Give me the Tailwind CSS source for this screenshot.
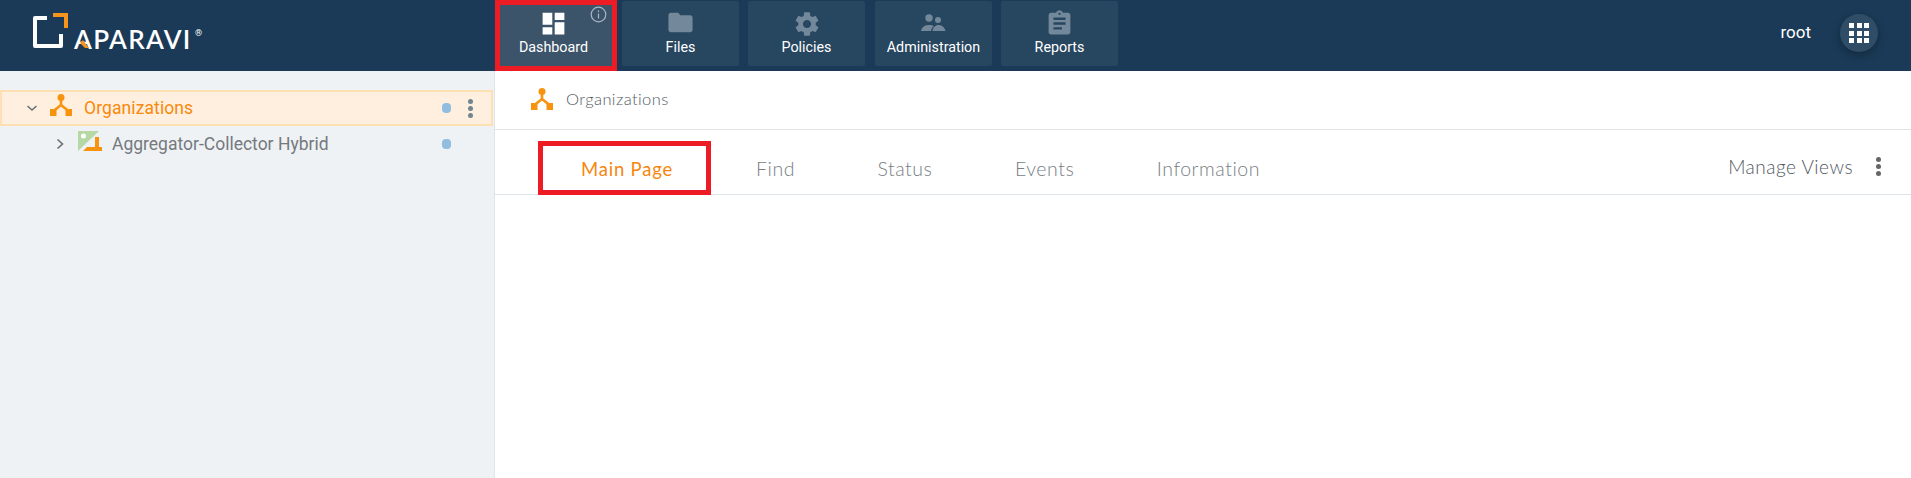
<!DOCTYPE html>
<html lang="en">
<head>
<meta charset="utf-8">
<script src="https://cdn.jsdelivr.net/npm/@tailwindcss/browser@4"></script>
<title>Aparavi</title>
</head>
<body class="w-[1911px] h-[478px] overflow-hidden bg-white font-['Roboto',sans-serif]">
<header class="h-[71px] bg-[#1a3a57] flex relative">
  <div class="w-[495px] shrink-0 relative">
    <svg class="absolute left-[30px] top-[10px]" width="40" height="40" viewBox="0 0 40 40" fill="none">
      <path d="M17 8H5V36H31V24" stroke="#fff" stroke-width="4" stroke-linejoin="round"/>
      <path d="M23 5H36V18" stroke="#f7941d" stroke-width="4"/>
    </svg>
    <span class="absolute left-[74px] top-[23px] text-[26px] leading-[32px] font-semibold tracking-[1.300px] text-white font-['Lato',sans-serif]">APARAVI</span>
    <svg class="absolute left-[80px] top-[40px]" width="9" height="9" viewBox="0 0 9 9" fill="#f7941d"><path d="M0 3 3 0l6 8H5z"/></svg>
    <span class="absolute left-[195px] top-[28px] text-[9px] leading-[10px] text-white">®</span>
  </div>
  <nav class="flex items-start gap-[9px] text-[14.300px] font-normal text-white leading-none">
    <a class="relative w-[122px] h-[71px] -mr-[4px] border-[5px] border-[#ed1c24] bg-[#3c5469] flex flex-col items-center pr-[5px]">
      <svg class="mt-[4px]" width="29" height="29" viewBox="0 0 24 24" fill="#fff"><path d="M3 13h8V3H3v10zm0 8h8v-6H3v6zm10 0h8V11h-8v10zm0-18v6h8V3h-8z"/></svg>
      <span class="mt-[2px]">Dashboard</span>
      <svg class="absolute right-[5px] top-[1px]" width="17" height="17" viewBox="0 0 17 17" fill="none" stroke="#aab6c1" stroke-width="1.200"><circle cx="8.500" cy="8.500" r="7.300"/><path d="M8.500 7.500v5M8.500 4.500v1.500"/></svg>
    </a>
    <a class="w-[117px] h-[65px] mt-[1px] rounded-[2px] bg-[#27465f] flex flex-col items-center">
      <svg class="mt-[7px]" width="29" height="29" viewBox="0 0 24 24" fill="#74889b"><path d="M10 4H4c-1.100 0-1.990.9-1.990 2L2 18c0 1.100.9 2 2 2h16c1.100 0 2-.9 2-2V8c0-1.100-.9-2-2-2h-8l-2-2z"/></svg>
      <span class="mt-[3px]">Files</span>
    </a>
    <a class="w-[117px] h-[65px] mt-[1px] rounded-[2px] bg-[#27465f] flex flex-col items-center">
      <svg class="mt-[9px]" width="28" height="28" viewBox="0 0 24 24" fill="#74889b"><path d="M19.430 12.980c.04-.32.07-.64.07-.98s-.03-.66-.07-.98l2.110-1.650c.19-.15.24-.42.12-.64l-2-3.460c-.12-.22-.39-.3-.61-.22l-2.490 1c-.52-.4-1.080-.73-1.690-.98l-.38-2.650A.488.488 0 0 0 14 2h-4c-.25 0-.46.18-.49.42l-.38 2.650c-.61.25-1.170.59-1.690.98l-2.490-1c-.23-.09-.49 0-.61.22l-2 3.460c-.13.22-.07.49.12.64l2.110 1.650c-.04.32-.07.65-.07.98s.03.66.07.98l-2.110 1.650c-.19.15-.24.42-.12.64l2 3.460c.12.22.39.3.61.22l2.490-1c.52.4 1.080.73 1.690.98l.38 2.650c.03.24.24.42.49.42h4c.25 0 .46-.18.49-.42l.38-2.650c.61-.25 1.170-.59 1.690-.98l2.490 1c.23.09.49 0 .61-.22l2-3.460c.12-.22.07-.49-.12-.64l-2.110-1.650zM12 15.500c-1.930 0-3.500-1.570-3.500-3.500s1.570-3.500 3.500-3.500 3.500 1.570 3.500 3.500-1.570 3.500-3.500 3.500z"/></svg>
      <span class="mt-[2px]">Policies</span>
    </a>
    <a class="w-[117px] h-[65px] mt-[1px] ml-[1px] rounded-[2px] bg-[#27465f] flex flex-col items-center">
      <svg class="mt-[12px]" width="25" height="20" viewBox="0 0 25 20" fill="#74889b"><circle cx="8" cy="5" r="3.700"/><circle cx="17" cy="7" r="3"/><path d="M0 18C1 13 5 12 8 12c2 0 3.500.5 5 1.300C11 14.500 10.500 16 10 18zM11.500 18c.5-3.500 3-6 6-6s6 2 7 6z"/></svg>
      <span class="mt-[7px]">Administration</span>
    </a>
    <a class="w-[117px] h-[65px] mt-[1px] rounded-[2px] bg-[#27465f] flex flex-col items-center">
      <svg class="mt-[8px]" width="29" height="29" viewBox="0 0 24 24" fill="#74889b"><path d="M19 3h-4.180C14.400 1.840 13.300 1 12 1c-1.300 0-2.400.84-2.820 2H5c-1.100 0-2 .9-2 2v14c0 1.100.9 2 2 2h14c1.100 0 2-.9 2-2V5c0-1.100-.9-2-2-2zm-7 0c.55 0 1 .45 1 1s-.45 1-1 1-1-.45-1-1 .45-1 1-1zm2 14H7v-2h7v2zm3-4H7v-2h10v2zm0-4H7V7h10v2z"/></svg>
      <span class="mt-[2px]">Reports</span>
    </a>
  </nav>
  <div class="ml-auto flex items-center h-[66px] pr-[33px]">
    <span class="text-[17px] text-white mr-[29px]">root</span>
    <button class="w-[38px] h-[38px] rounded-full bg-[#2f4d66] shadow-[0_3px_8px_rgba(0,0,0,0.3)] grid grid-cols-[5px_5px_5px] grid-rows-[5px_5px_5px] gap-[2.500px] place-content-center">
      <i class="bg-white"></i><i class="bg-white"></i><i class="bg-white"></i>
      <i class="bg-white"></i><i class="bg-white"></i><i class="bg-white"></i>
      <i class="bg-white"></i><i class="bg-white"></i><i class="bg-white"></i>
    </button>
  </div>
</header>
<div class="flex h-[407px]">
  <aside class="w-[495px] shrink-0 bg-[#eef2f5] border-r border-[#e0e5e9] pt-[19px]">
    <div class="h-[36px] w-[493px] bg-[#ffefde] border-2 border-[#ffe0b5] flex items-center pl-[24px] text-[17.500px] tracking-[0.1px] text-[#f7890c]">
      <svg width="12" height="12" viewBox="0 0 12 12" fill="none" stroke="#666e75" stroke-width="1.500"><path d="M1.500 4l4.500 4 4.500-4"/></svg>
      <svg class="ml-[12px] -mt-[6px]" width="22" height="22" viewBox="0 0 22 22" fill="#f7930f"><circle cx="11" cy="3.500" r="3.500"/><path d="M11 6v5L3.500 17M11 11l7.500 6" fill="none" stroke="#f7930f" stroke-width="2.600"/><rect x="0" y="15" width="6.500" height="7"/><rect x="15.500" y="15" width="6.500" height="7"/></svg>
      <span class="ml-[12px]">Organizations</span>
      <i class="ml-auto w-[9px] h-[10px] rounded-[4px] bg-[#90bde0]"></i>
      <span class="ml-[17px] mr-[18px] flex flex-col gap-[2px]"><i class="w-[5px] h-[5px] rounded-full bg-[#6f8590]"></i><i class="w-[5px] h-[5px] rounded-full bg-[#6f8590]"></i><i class="w-[5px] h-[5px] rounded-full bg-[#6f8590]"></i></span>
    </div>
    <div class="h-[36px] w-[493px] flex items-center pl-[55px] text-[17.500px] text-[#75797d]">
      <svg width="10" height="12" viewBox="0 0 10 12" fill="none" stroke="#666e75" stroke-width="1.600"><path d="M2.500 1.500l5 4.500-5 4.500"/></svg>
      <svg class="ml-[13px] -mt-[5px]" width="24" height="21" viewBox="0 0 24 21">
        <path d="M0 0h21L0 20z" fill="#b5d8a4"/>
        <circle cx="5.500" cy="5" r="2.500" fill="#fff"/>
        <path d="M17 6h4v10h3v4H5l4-4h8z" fill="#f7930f"/>
      </svg>
      <span class="ml-[10px]">Aggregator-Collector Hybrid</span>
      <i class="ml-auto mr-[42px] w-[9px] h-[10px] rounded-[4px] bg-[#90bde0]"></i>
    </div>
  </aside>
  <main class="flex-1 min-w-0">
    <div class="h-[59px] border-b border-[#dfe3e6] flex items-center pl-[36px] pb-[2px]">
      <svg width="22" height="22" viewBox="0 0 22 22" fill="#f7930f"><circle cx="11" cy="3.500" r="3.500"/><path d="M11 6v5L3.500 17M11 11l7.500 6" fill="none" stroke="#f7930f" stroke-width="2.600"/><rect x="0" y="15" width="6.500" height="7"/><rect x="15.500" y="15" width="6.500" height="7"/></svg>
      <span class="ml-[13px] text-[16.500px] font-light tracking-[0.4px] text-[#525b65] font-['Lato',sans-serif]">Organizations</span>
    </div>
    <div class="h-[65px] border-b border-[#dfe4e8] flex items-end pl-[43px] pr-[30px] font-['Lato',sans-serif] font-light text-[19.500px] text-[#787e84]">
      <a class="w-[173px] h-[54px] -mb-px border-[5px] border-[#ed1c24] bg-white text-[#f7860f] font-normal text-[18.500px] flex items-center pl-[38px] pt-[3px] tracking-[0.8px]">Main Page</a>
      <div class="flex h-[54px] items-center pt-[4px] gap-[82.500px] ml-[45px] tracking-[0.55px]">
        <a>Find</a><a>Status</a><a>Events</a><a>Information</a>
      </div>
      <div class="ml-auto h-[54px] flex items-center pt-[1px] text-[19px] text-[#52595f] tracking-[0.5px]">
        <span>Manage Views</span>
        <span class="ml-[23px] -mt-[2px] flex flex-col gap-[2px]"><i class="w-[5px] h-[5px] rounded-full bg-[#666]"></i><i class="w-[5px] h-[5px] rounded-full bg-[#666]"></i><i class="w-[5px] h-[5px] rounded-full bg-[#666]"></i></span>
      </div>
    </div>
  </main>
</div>
</body>
</html>
